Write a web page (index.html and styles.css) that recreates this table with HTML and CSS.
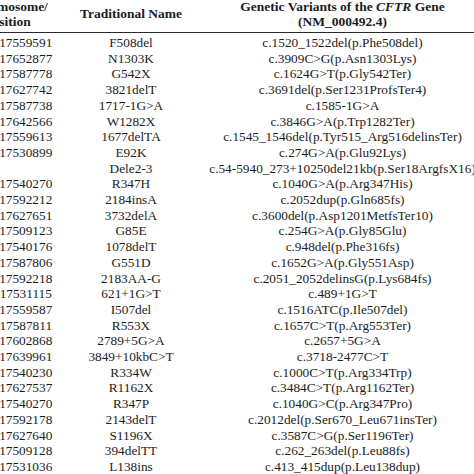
FILE: index.html
```html
<!DOCTYPE html>
<html>
<head>
<meta charset="utf-8">
<link rel="stylesheet" href="styles.css">
</head>
<body>
<div class="frame">
<table class="variants">
  <colgroup>
    <col class="c-pos">
    <col class="c-name">
    <col class="c-var">
  </colgroup>
  <thead>
    <tr>
      <th>Chromosome/<br>Position</th>
      <th>Traditional Name</th>
      <th>Genetic Variants of the <i>CFTR</i> Gene<br>(NM_000492.4)</th>
    </tr>
  </thead>
  <tbody>
    <tr class="first"><td>chr7:117559591</td><td>F508del</td><td>c.1520_1522del(p.Phe508del)</td></tr>
    <tr><td>chr7:117652877</td><td>N1303K</td><td>c.3909C&gt;G(p.Asn1303Lys)</td></tr>
    <tr><td>chr7:117587778</td><td>G542X</td><td>c.1624G&gt;T(p.Gly542Ter)</td></tr>
    <tr><td>chr7:117627742</td><td>3821delT</td><td>c.3691del(p.Ser1231ProfsTer4)</td></tr>
    <tr><td>chr7:117587738</td><td>1717-1G&gt;A</td><td>c.1585-1G&gt;A</td></tr>
    <tr><td>chr7:117642566</td><td>W1282X</td><td>c.3846G&gt;A(p.Trp1282Ter)</td></tr>
    <tr><td>chr7:117559613</td><td>1677delTA</td><td>c.1545_1546del(p.Tyr515_Arg516delinsTer)</td></tr>
    <tr><td>chr7:117530899</td><td>E92K</td><td>c.274G&gt;A(p.Glu92Lys)</td></tr>
    <tr><td></td><td>Dele2-3</td><td>c.54-5940_273+10250del21kb(p.Ser18ArgfsX16)</td></tr>
    <tr><td>chr7:117540270</td><td>R347H</td><td>c.1040G&gt;A(p.Arg347His)</td></tr>
    <tr><td>chr7:117592212</td><td>2184insA</td><td>c.2052dup(p.Gln685fs)</td></tr>
    <tr><td>chr7:117627651</td><td>3732delA</td><td>c.3600del(p.Asp1201MetfsTer10)</td></tr>
    <tr><td>chr7:117509123</td><td>G85E</td><td>c.254G&gt;A(p.Gly85Glu)</td></tr>
    <tr><td>chr7:117540176</td><td>1078delT</td><td>c.948del(p.Phe316fs)</td></tr>
    <tr><td>chr7:117587806</td><td>G551D</td><td>c.1652G&gt;A(p.Gly551Asp)</td></tr>
    <tr><td>chr7:117592218</td><td>2183AA-G</td><td>c.2051_2052delinsG(p.Lys684fs)</td></tr>
    <tr><td>chr7:117531115</td><td>621+1G&gt;T</td><td>c.489+1G&gt;T</td></tr>
    <tr><td>chr7:117559587</td><td>I507del</td><td>c.1516ATC(p.Ile507del)</td></tr>
    <tr><td>chr7:117587811</td><td>R553X</td><td>c.1657C&gt;T(p.Arg553Ter)</td></tr>
    <tr><td>chr7:117602868</td><td>2789+5G&gt;A</td><td>c.2657+5G&gt;A</td></tr>
    <tr><td>chr7:117639961</td><td>3849+10kbC&gt;T</td><td>c.3718-2477C&gt;T</td></tr>
    <tr><td>chr7:117540230</td><td>R334W</td><td>c.1000C&gt;T(p.Arg334Trp)</td></tr>
    <tr><td>chr7:117627537</td><td>R1162X</td><td>c.3484C&gt;T(p.Arg1162Ter)</td></tr>
    <tr><td>chr7:117540270</td><td>R347P</td><td>c.1040G&gt;C(p.Arg347Pro)</td></tr>
    <tr><td>chr7:117592178</td><td>2143delT</td><td>c.2012del(p.Ser670_Leu671insTer)</td></tr>
    <tr><td>chr7:117627640</td><td>S1196X</td><td>c.3587C&gt;G(p.Ser1196Ter)</td></tr>
    <tr><td>chr7:117509128</td><td>394delTT</td><td>c.262_263del(p.Leu88fs)</td></tr>
    <tr><td>chr7:117531036</td><td>L138ins</td><td>c.413_415dup(p.Leu138dup)</td></tr>
  </tbody>
</table>
</div>
</body>
</html>
```
FILE: styles.css
```css
html, body {
  margin: 0;
  padding: 0;
  background: #ffffff;
  overflow: hidden;
}
.frame {
  width: 474px;
  height: 474px;
  overflow: hidden;
}
.variants {
  margin-left: -41px;
  width: 523px;
  table-layout: fixed;
  border-collapse: collapse;
  font-family: "Liberation Serif", "Times New Roman", serif;
  color: #1c1c1c;
}
.c-pos { width: 100px; }
.c-name { width: 144px; }
.c-var { width: 279px; }
.variants th {
  font-size: 13.5px;
  font-weight: bold;
  line-height: 14.5px;
  padding: 0 0 3px 0;
  text-align: center;
  vertical-align: middle;
  border-bottom: 1px solid #2a2a2a;
  white-space: nowrap;
}
.variants th:first-child {
  padding-right: 3px;
}
.variants td {
  font-size: 13.3px;
  line-height: 15.7px;
  padding: 0;
  text-align: center;
  white-space: nowrap;
}
.variants tr.first td {
  padding-top: 2px;
}
```
